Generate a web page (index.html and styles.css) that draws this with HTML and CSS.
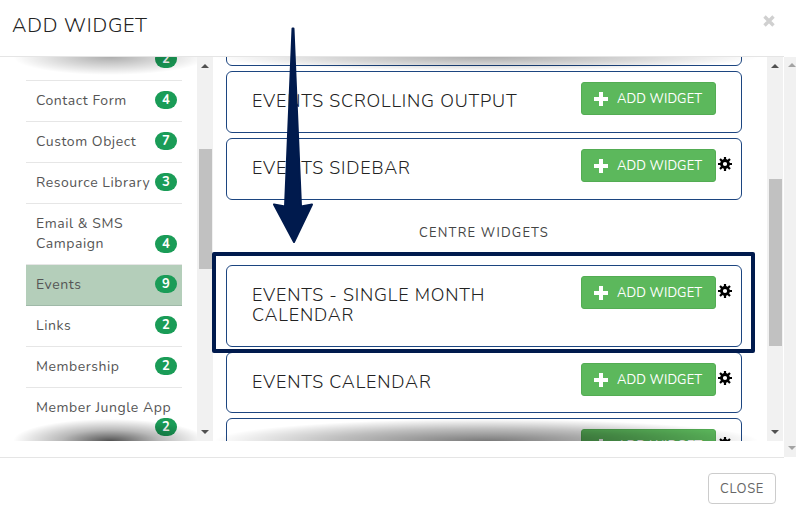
FILE: index.html
```html
<!DOCTYPE html>
<html lang="en">
<head>
<meta charset="utf-8">
<title>Add Widget</title>
<link rel="stylesheet" href="styles.css">
</head>
<body>
<div class="page">
  <div class="modal">
    <header class="modal-head">
      <h1>ADD WIDGET</h1>
      <svg class="x" viewBox="0 0 12 12" width="12" height="12"><path d="M1.500 1.500l9 9M10.500 1.500l-9 9" stroke="#d0d0d0" stroke-width="3.400"/></svg>
    </header>
    <div class="modal-body">
      <div class="side">
        <ul class="cats">
          <li class="cat first"><span></span><b class="badge">2</b></li>
          <li class="cat"><span>Contact Form</span><b class="badge">4</b></li>
          <li class="cat"><span>Custom Object</span><b class="badge">7</b></li>
          <li class="cat"><span>Resource Library</span><b class="badge">3</b></li>
          <li class="cat tall"><span>Email &amp; SMS<br>Campaign</span><b class="badge">4</b></li>
          <li class="cat active"><span>Events</span><b class="badge">9</b></li>
          <li class="cat"><span>Links</span><b class="badge">2</b></li>
          <li class="cat"><span>Membership</span><b class="badge">2</b></li>
          <li class="cat last"><span>Member Jungle App</span><b class="badge">2</b></li>
        </ul>
        <div class="shade top"></div>
        <div class="shade bottom"></div>
        <div class="bar side-bar"><i class="up"></i><i class="thumb"></i><i class="down"></i></div>
      </div>
      <div class="main">
        <div class="cards">
          <div class="card stub"></div>
          <div class="card"><h2>EVENTS SCROLLING OUTPUT</h2><a class="add"><svg class="plus" viewBox="0 0 14 14" width="14" height="14"><path d="M5 0h4v5h5v4H9v5H5V9H0V5h5z" fill="#fff"/></svg>ADD WIDGET</a></div>
          <div class="card"><h2>EVENTS SIDEBAR</h2><a class="add"><svg class="plus" viewBox="0 0 14 14" width="14" height="14"><path d="M5 0h4v5h5v4H9v5H5V9H0V5h5z" fill="#fff"/></svg>ADD WIDGET</a><svg class="gear" viewBox="0 0 14 14" width="14" height="14"><use href="#g"/></svg></div>
          <p class="group">CENTRE WIDGETS</p>
          <div class="card large"><h2>EVENTS - SINGLE MONTH CALENDAR</h2><a class="add"><svg class="plus" viewBox="0 0 14 14" width="14" height="14"><path d="M5 0h4v5h5v4H9v5H5V9H0V5h5z" fill="#fff"/></svg>ADD WIDGET</a><svg class="gear" viewBox="0 0 14 14" width="14" height="14"><use href="#g"/></svg></div>
          <div class="card short"><h2>EVENTS CALENDAR</h2><a class="add"><svg class="plus" viewBox="0 0 14 14" width="14" height="14"><path d="M5 0h4v5h5v4H9v5H5V9H0V5h5z" fill="#fff"/></svg>ADD WIDGET</a><svg class="gear" viewBox="0 0 14 14" width="14" height="14"><use href="#g"/></svg></div>
          <div class="card"><h2>&nbsp;</h2><a class="add"><svg class="plus" viewBox="0 0 14 14" width="14" height="14"><path d="M5 0h4v5h5v4H9v5H5V9H0V5h5z" fill="#fff"/></svg>ADD WIDGET</a><svg class="gear" viewBox="0 0 14 14" width="14" height="14"><use href="#g"/></svg></div>
        </div>
        <div class="shade top"></div>
        <div class="shade bottom"></div>
        <div class="bar main-bar"><i class="up"></i><i class="thumb"></i><i class="down"></i></div>
      </div>
    </div>
    <footer class="modal-foot"><button class="close">CLOSE</button></footer>
  </div>
  <div class="bar page-bar"><i class="up"></i><i class="down"></i></div>
  <div class="highlight"></div>
  <svg class="arrow" viewBox="0 0 44 220" width="44" height="220"><path d="M21.500 1.500L22.500 1.500L30 179.500L41 177.500L23 215L3 177.500L14 179.500Z" fill="#001a4d" stroke="#001a4d" stroke-width="2" stroke-linejoin="round"/></svg>
</div>
<svg class="defs" width="0" height="0"><defs><g id="g"><circle cx="7" cy="7" r="3.500" fill="none" stroke="#000" stroke-width="2.800"/><path d="M7 0v3M7 11v3M0 7h3M11 7h3M2 2l2 2M10 10l2 2M12 2l-2 2M4 10l-2 2" stroke="#000" stroke-width="2.200"/></g></defs></svg>
</body>
</html>
```
FILE: styles.css
```css
* { box-sizing: border-box; }
html, body { margin: 0; padding: 0; }
body { width: 796px; height: 508px; overflow: hidden; background: #fff; font-family: "Nunito", "Lato", sans-serif; color: #333; }
.page { position: relative; width: 796px; height: 508px; display: flex; }
.modal { width: 784px; height: 508px; display: flex; flex-direction: column; background: #fff; }
.modal-head { height: 57px; flex: none; display: flex; align-items: flex-start; justify-content: space-between; padding: 13px 9px 0 12px; border-bottom: 1px solid #e5e5e5; }
.modal-head h1 { margin: 0; font: 300 20px/26px "Nunito", "Lato", sans-serif; letter-spacing: .8px; color: #222; }
.x { margin-top: 2px; }
.modal-body { height: 384px; flex: none; display: flex; overflow: hidden; }
.side { position: relative; width: 214px; flex: none; display: flex; overflow: hidden; padding-left: 26px; }
.cats { list-style: none; margin: -17px 0 0; padding: 0; width: 156px; flex: none; }
.cat { height: 41px; display: flex; justify-content: space-between; align-items: center; border-bottom: 1px solid #e6e6e6; padding: 0 0 2px 10px; font-size: 14px; letter-spacing: .55px; color: #555; line-height: 20px; }
.cat span { margin-top: 2px; }
.cat.tall { height: 61px; align-items: flex-end; padding-bottom: 11px; }
.cat.tall span { margin-bottom: -1px; }
.cat.active { background: #b4ceba; border-bottom-color: #9fb9a8; }
.cat.last { border: 0; height: 60px; align-items: flex-start; padding-top: 8px; position: relative; }
.badge { flex: none; width: 22px; height: 18px; margin-right: 5px; border-radius: 9px; background: #1a9c57; color: #fff; font: 700 13px/18px "Nunito", "Lato", sans-serif; text-align: center; letter-spacing: 0; }
.cat.last .badge { position: absolute; right: 0; top: 30px; }
.bar { position: absolute; width: 16px; background: #f1f1f1; top: 0; }
.bar i { display: block; position: absolute; }
.bar .up, .bar .down { left: 4px; width: 0; height: 0; border-left: 4px solid transparent; border-right: 4px solid transparent; }
.bar .up { top: 7px; border-bottom: 4px solid #505050; }
.bar .down { bottom: 7px; border-top: 4px solid #505050; }
.thumb { left: 2px; width: 13px; background: #c1c1c1; }
.side-bar { left: 197px; height: 384px; }
.side-bar .thumb { top: 92px; height: 120px; }
.main { position: relative; width: 570px; flex: none; overflow: hidden; }
.cards { width: 516px; margin-left: 12px; margin-top: -51px; display: flex; flex-direction: column; gap: 5px; }
.card { position: relative; height: 62px; flex: none; border: 1px solid #1c4580; border-radius: 6px; background: #fff; padding: 19px 0 0 25px; }
.card.stub { height: 60px; }
.card.short { height: 61px; }
.card.large { height: 82px; }
.card.large h2 { width: 290px; }
.card h2 { margin: 0; font: 300 18px/20px "Nunito", "Lato", sans-serif; letter-spacing: .8px; color: #222; }
.add { position: absolute; left: 354px; top: 10px; width: 135px; height: 33px; border: 1px solid #53ac53; border-radius: 3px; background: #5cb85c; color: #fff; font-size: 13px; line-height: 29px; letter-spacing: .1px; padding: 2px 0 0 12px; display: flex; align-items: center; }
.plus { margin: 0 9px 2px 0; flex: none; }
.gear { position: absolute; left: 491px; top: 18px; }
.group { margin: 21px 0 20px; height: 14px; text-align: center; font-size: 13px; line-height: 14px; letter-spacing: 1.200px; color: #444; }
.main-bar { left: 553px; height: 384px; }
.main-bar .thumb { top: 122px; height: 167px; }
.page-bar { left: 784px; top: 57px; width: 12px; height: 400px; }
.page-bar .up { top: 6px; border-bottom-color: #a3a3a3; }
.page-bar .down { bottom: 7px; border-top-color: #a3a3a3; }
.shade { position: absolute; pointer-events: none; }
.side .shade { left: 13px; width: 194px; }
.main .shade { left: 0; width: 545px; }
.shade.top { top: 0; height: 18px; background: radial-gradient(ellipse 50% 100% at 50% 0, rgba(0,0,0,.32) 0, rgba(0,0,0,.16) 50%, rgba(0,0,0,0) 100%); }
.shade.bottom { bottom: 0; height: 22px; background: radial-gradient(ellipse 50% 100% at 50% 100%, rgba(0,0,0,.68) 0, rgba(0,0,0,.28) 50%, rgba(0,0,0,0) 100%); }
.main .shade.top { height: 14px; background: radial-gradient(ellipse 50% 100% at 50% 0, rgba(0,0,0,.32) 0, rgba(0,0,0,.16) 55%, rgba(0,0,0,0) 100%); }
.main .shade.bottom { background: radial-gradient(ellipse 50% 100% at 50% 100%, rgba(0,0,0,.52) 0, rgba(0,0,0,.26) 55%, rgba(0,0,0,0) 100%); }
.modal-foot { height: 51px; flex: none; margin-top: 16px; border-top: 1px solid #e5e5e5; display: flex; justify-content: flex-end; align-items: flex-start; padding: 15px 8px 0 0; }
.close { width: 68px; height: 31px; background: #fff; border: 1px solid #ccc; border-radius: 4px; font: 400 13px/29px "Nunito", "Lato", sans-serif; letter-spacing: .6px; color: #666; padding: 1px 0 0; }
.highlight { position: absolute; left: 212px; top: 252px; width: 543px; height: 101px; border: 4px solid #001a4d; border-radius: 2px; }
.arrow { position: absolute; left: 271px; top: 27px; }
.defs { position: absolute; }
```
